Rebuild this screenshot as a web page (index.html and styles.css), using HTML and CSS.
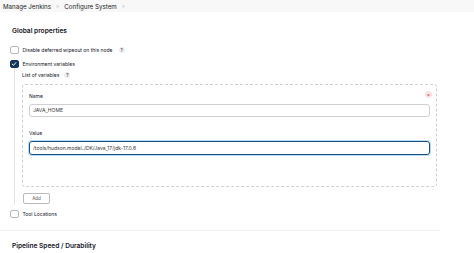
FILE: index.html
```html
<!DOCTYPE html>
<html lang="en">
  <head>
    <meta charset="UTF-8" />
    <title>Configure System</title>
    <link rel="stylesheet" href="styles.css">
  </head>
  <body>
    <div class="breadcrumbs">
      <span class="crumb">Manage Jenkins</span>
      <span class="sep">&gt;</span>
      <span class="crumb">Configure System</span>
      <span class="sep">&gt;</span>
    </div>
    <div class="main">
      <div class="section-title">Global properties</div>

      <div class="check-row first">
        <span class="checkbox"></span>
        <span class="label">Disable deferred wipeout on this node</span>
        <span class="help">?</span>
      </div>

      <div class="check-row">
        <span class="checkbox checked">
          <svg viewBox="0 0 10 10" width="6" height="6"><path d="M2 5.2 L4.2 7.2 L8 2.8" fill="none" stroke="#fff" stroke-width="1.6" stroke-linecap="round" stroke-linejoin="round"/></svg>
        </span>
        <span class="label">Environment variables</span>
      </div>

      <div class="nested">
        <div class="list-label">
          <span class="label">List of variables</span>
          <span class="help">?</span>
        </div>
        <div class="repeated">
          <span class="delete">&times;</span>
          <div class="field-label">Name</div>
          <div class="input">JAVA_HOME</div>
          <div class="field-label value-label">Value</div>
          <div class="input focused">/tools/hudson.model.JDK/Java_17/jdk-17.0.6</div>
        </div>
        <button class="button">Add</button>
      </div>

      <div class="check-row tools">
        <span class="checkbox"></span>
        <span class="label">Tool Locations</span>
      </div>
    </div>
    <div class="divider"></div>
    <div class="main">
      <div class="section-title pipeline">Pipeline Speed / Durability</div>
    </div>
  </body>
</html>
```

FILE: styles.css
```css
body {
  margin: 0;
  padding: 0;
  background-color: #fff;
  font-family: Inter, "Noto Sans", sans-serif;
  color: #14141f;
  font-size: 5px;
  width: 474px;
  height: 253px;
  overflow: hidden;
}

.breadcrumbs {
  height: 12px;
  display: flex;
  align-items: center;
  gap: 5px;
  padding-left: 3px;
  background-color: #f8f8f9;
  font-size: 6.2px;
  color: #222;
}

.sep {
  color: #aaa;
  font-size: 5px;
}

.main {
  padding-left: 10px;
  width: 427px;
}

.section-title {
  margin: 15px 0 0 2px;
  height: 8px;
  line-height: 8px;
  font-size: 6.6px;
  font-weight: 600;
}

.check-row {
  display: flex;
  align-items: center;
  gap: 4px;
  height: 8px;
  margin-top: 6px;
}

.check-row.first {
  margin-top: 11px;
}

.checkbox {
  width: 6.5px;
  height: 6.5px;
  border: 0.8px solid #b8b8c0;
  border-radius: 2px;
  background: #fff;
  display: flex;
  align-items: center;
  justify-content: center;
}

.checkbox.checked {
  background: #16375c;
  border-color: #16375c;
}

.help {
  width: 6px;
  height: 6px;
  border-radius: 50%;
  background: #ededf0;
  color: #555;
  font-size: 4.2px;
  font-weight: 600;
  display: flex;
  align-items: center;
  justify-content: center;
  margin-left: 2px;
}

.nested {
  margin-left: 4px;
  border-left: 1px solid #e2e2e6;
  padding: 3px 0 1px 7px;
}

.list-label {
  display: flex;
  align-items: center;
  gap: 3px;
  height: 8px;
}

.repeated {
  position: relative;
  margin-top: 5px;
  height: 103px;
  width: 415px;
  border: 1px dashed #cfcfd4;
  border-radius: 3px;
  padding: 0 6px 0 6px;
  box-sizing: border-box;
}

.delete {
  position: absolute;
  top: 6px;
  right: 4px;
  width: 7px;
  height: 7px;
  border-radius: 50%;
  background: #fde3e3;
  color: #d33;
  font-size: 5px;
  line-height: 7px;
  text-align: center;
}

.field-label {
  margin-top: 7px;
  height: 8px;
  line-height: 8px;
}

.value-label {
  margin-top: 12px;
}

.input {
  margin-top: 4px;
  height: 11px;
  border: 1px solid #cfcfd4;
  border-radius: 3px;
  padding-left: 3px;
  line-height: 11px;
  color: #333;
}

.input.focused {
  height: 12px;
  line-height: 12px;
  border-color: #1f4d7a;
  box-shadow: 0 0 0 1px #b7dbef;
}

.button {
  display: block;
  margin-top: 6px;
  margin-left: 1px;
  width: 27px;
  height: 11px;
  border: 1px solid #bbb;
  border-radius: 2px;
  background: #fff;
  font-family: Inter, "Noto Sans", sans-serif;
  font-size: 4.5px;
  color: #555;
  padding: 0;
}

.check-row.tools {
  margin-top: 5px;
}

.divider {
  margin-top: 12px;
  width: 440px;
  height: 1px;
  background: #f0f0f2;
}

.section-title.pipeline {
  margin-top: 11px;
}
```
